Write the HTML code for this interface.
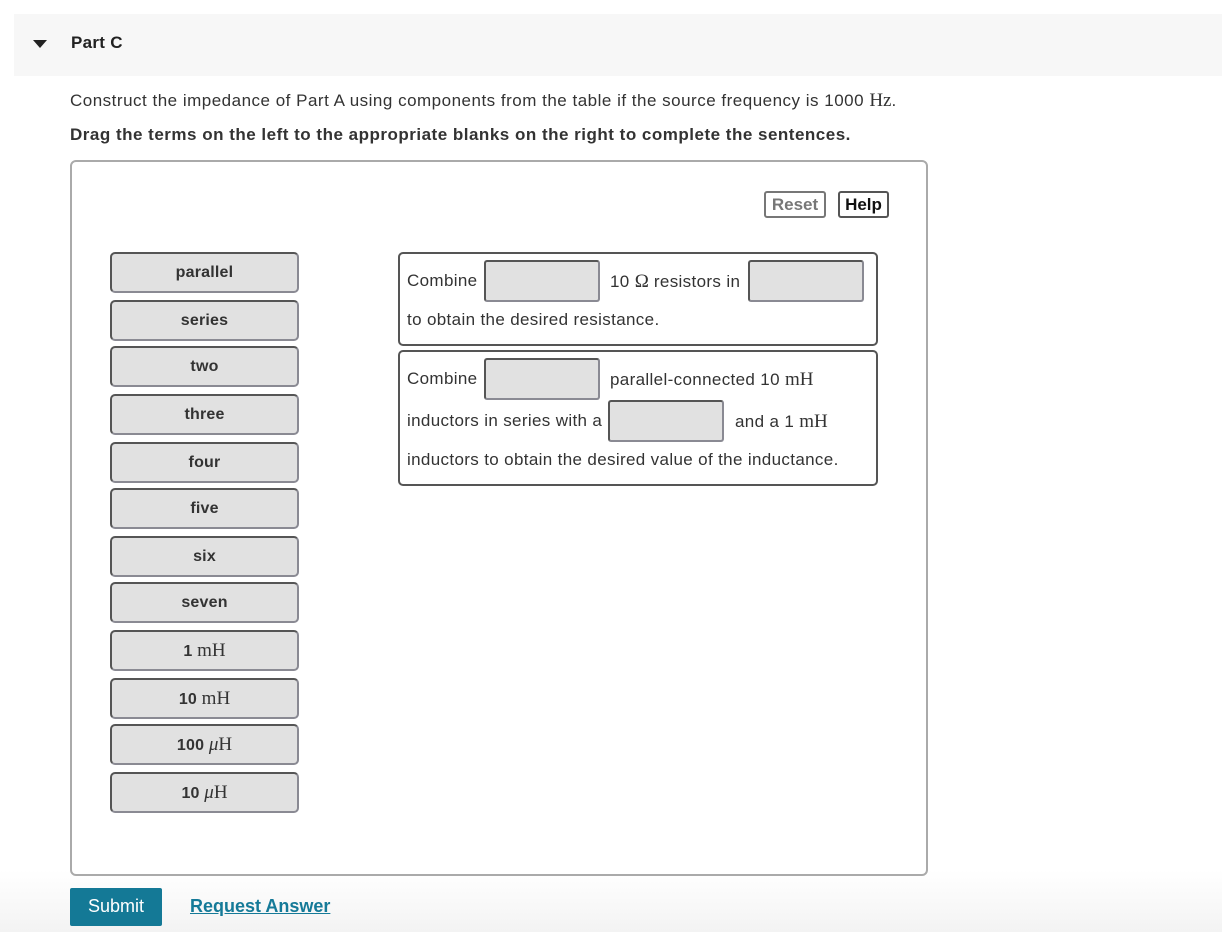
<!DOCTYPE html>
<html><head><meta charset="utf-8"><style>
*{margin:0;padding:0;box-sizing:border-box}
body{width:1222px;height:932px;position:relative;overflow:hidden;font-family:"Liberation Sans",Arial,sans-serif;color:#333;background:linear-gradient(#fff 0,#fff 870px,#f3f3f3 932px)}
.a{position:absolute}
.m{font-family:"Liberation Serif","DejaVu Serif",serif;font-size:19px;letter-spacing:0}
.tile{position:absolute;left:110px;width:189px;height:41px;background:#e1e1e1;border:2px solid #8a8a93;border-top-color:#555;border-left-color:#555;border-radius:5px;text-align:center;font-weight:bold;font-size:16px;line-height:38px;color:#333;letter-spacing:0.2px}
.drop{position:absolute;width:116px;height:42px;background:#e1e1e1;border:2px solid #8a8a93;border-top-color:#555;border-left-color:#555;border-radius:3px}
.sb{position:absolute;left:398px;width:480px;border:2px solid #555;border-radius:5px;background:#fff}
.t{position:absolute;font-size:17px;letter-spacing:0.35px;color:#333;white-space:nowrap}
</style></head><body>
<div class="a" style="left:14px;top:14px;width:1208px;height:62px;background:#f7f7f7"></div>
<div class="a" style="left:33px;top:40px;width:0;height:0;border-left:7px solid transparent;border-right:7px solid transparent;border-top:8px solid #222"></div>
<div class="a" style="left:71px;top:33px;font-size:17px;font-weight:bold;color:#222;letter-spacing:0.3px">Part C</div>
<div class="t" style="left:70px;top:90px;letter-spacing:0.5px">Construct the impedance of Part A using components from the table if the source frequency is 1000 <span class="m">Hz</span>.</div>
<div class="t" style="left:70px;top:125px;font-weight:bold;letter-spacing:0.5px">Drag the terms on the left to the appropriate blanks on the right to complete the sentences.</div>
<div class="a" style="left:70px;top:160px;width:858px;height:716px;border:2px solid #aaa;border-radius:6px;background:#fff"></div>
<div class="a" style="left:764px;top:191px;width:62px;height:27px;border:2px solid #777;border-radius:3px;color:#777;font-weight:bold;font-size:17px;text-align:center;line-height:23px">Reset</div>
<div class="a" style="left:838px;top:191px;width:51px;height:27px;border:2px solid #555;border-radius:3px;color:#111;font-weight:bold;font-size:17px;text-align:center;line-height:23px">Help</div>
<div class="tile" style="top:252px">parallel</div>
<div class="tile" style="top:300px">series</div>
<div class="tile" style="top:346px">two</div>
<div class="tile" style="top:394px">three</div>
<div class="tile" style="top:442px">four</div>
<div class="tile" style="top:488px">five</div>
<div class="tile" style="top:536px">six</div>
<div class="tile" style="top:582px">seven</div>
<div class="tile" style="top:630px">1 <span class="m" style="font-weight:normal">mH</span></div>
<div class="tile" style="top:678px">10 <span class="m" style="font-weight:normal">mH</span></div>
<div class="tile" style="top:724px">100 <span class="m" style="font-weight:normal;font-style:italic">μ</span><span class="m" style="font-weight:normal">H</span></div>
<div class="tile" style="top:772px">10 <span class="m" style="font-weight:normal;font-style:italic">μ</span><span class="m" style="font-weight:normal">H</span></div>
<div class="sb" style="top:252px;height:94px"></div>
<div class="sb" style="top:350px;height:136px"></div>
<div class="t" style="left:407px;top:271px">Combine</div>
<div class="drop" style="left:484px;top:260px"></div>
<div class="t" style="left:610px;top:271px">10 <span class="m">Ω</span> resistors in</div>
<div class="drop" style="left:748px;top:260px"></div>
<div class="t" style="left:407px;top:310px">to obtain the desired resistance.</div>
<div class="t" style="left:407px;top:369px">Combine</div>
<div class="drop" style="left:484px;top:358px"></div>
<div class="t" style="left:610px;top:369px">parallel-connected 10 <span class="m">mH</span></div>
<div class="t" style="left:407px;top:411px">inductors in series with a</div>
<div class="drop" style="left:608px;top:400px"></div>
<div class="t" style="left:735px;top:411px">and a 1 <span class="m">mH</span></div>
<div class="t" style="left:407px;top:450px">inductors to obtain the desired value of the inductance.</div>
<div class="a" style="left:70px;top:888px;width:92px;height:38px;background:#147996;border-radius:2px;color:#fff;font-size:18px;text-align:center;line-height:36px">Submit</div>
<div class="a" style="left:190px;top:896px;color:#157a98;font-weight:bold;font-size:18px;text-decoration:underline">Request Answer</div>
</body></html>
